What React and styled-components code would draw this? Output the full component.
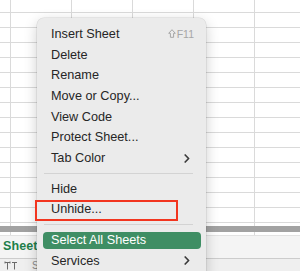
import React from "react"
import styled, { createGlobalStyle } from "styled-components"

const GlobalStyle = createGlobalStyle`
  html, body {
    margin: 0;
    padding: 0;
    overflow: hidden;
    background: #ffffff;
  }
`

const COLS = 6
const ROWS = 16

const App = () => {
  const cells = Array.from({ length: COLS * ROWS })
  const tail = Array.from({ length: COLS })

  return (
    <Screen>
      <GlobalStyle />
      <SheetGrid>
        {cells.map((_, i) => (
          <Cell key={i} />
        ))}
      </SheetGrid>
      <ScrollTrack />
      <GridTail>
        {tail.map((_, i) => (
          <TailCell key={i} />
        ))}
      </GridTail>
      <TabBar>
        <SheetTab>Sheet2</SheetTab>
      </TabBar>
      <StatusBar>
        <ToolIcon width="14" height="9" viewBox="0 0 14 9">
          <path d="M1 1.5h5M3.5 1.5v7M8 1.5h5M10.5 1.5v7" />
          <path d="M1 0.5v2M6 0.5v2" />
        </ToolIcon>
        <ToolGlyph>S</ToolGlyph>
      </StatusBar>

      <ContextMenu>
        <MenuItem>
          Insert Sheet
          <Shortcut>
            <svg width="8" height="9" viewBox="0 0 8 9">
              <path
                d="M4 0.7 L7.3 4.3 H5.6 V8.3 H2.4 V4.3 H0.7 Z"
                fill="none"
                stroke="#a6a6a6"
                strokeWidth="1"
                strokeLinejoin="round"
              />
            </svg>
            F11
          </Shortcut>
        </MenuItem>
        <MenuItem>Delete</MenuItem>
        <MenuItem>Rename</MenuItem>
        <MenuItem>Move or Copy...</MenuItem>
        <MenuItem>View Code</MenuItem>
        <MenuItem>Protect Sheet...</MenuItem>
        <MenuItem>
          Tab Color
          <Chevron />
        </MenuItem>
        <Separator />
        <MenuItem>Hide</MenuItem>
        <MenuItem>Unhide...</MenuItem>
        <Separator />
        <MenuItem $active>Select All Sheets</MenuItem>
        <MenuItem>
          Services
          <Chevron />
        </MenuItem>
      </ContextMenu>

      <Callout />
    </Screen>
  )
}

const Chevron = () => (
  <ChevronIcon width="6" height="9" viewBox="0 0 6 9">
    <path d="M1.2 1 L4.6 4.5 L1.2 8" />
  </ChevronIcon>
)

const Screen = styled.div`
  position: relative;
  width: 300px;
  height: 271px;
  overflow: hidden;
  display: flex;
  flex-direction: column;
  background: #ffffff;
  font-family: "Liberation Sans", Arial, sans-serif;
`

const SheetGrid = styled.div`
  display: grid;
  grid-template-columns: 11px repeat(5, 61px);
  grid-template-rows: 13px;
  grid-auto-rows: 15px;
  height: 226px;
  overflow: hidden;
  flex-shrink: 0;
`

const Cell = styled.div`
  box-sizing: border-box;
  border-right: 1px solid #dadada;
  border-bottom: 1px solid #dadada;
`

const ScrollTrack = styled.div`
  height: 6px;
  flex-shrink: 0;
  background: #a2a2a2;
`

const GridTail = styled.div`
  display: grid;
  grid-template-columns: 11px repeat(5, 61px);
  height: 3px;
  flex-shrink: 0;
  border-bottom: 1px solid #e2e2e2;
`

const TailCell = styled.div`
  border-right: 1px solid #dadada;
`

const TabBar = styled.div`
  display: flex;
  align-items: center;
  height: 23px;
  flex-shrink: 0;
  padding: 0 0 3px 3px;
  box-sizing: border-box;
  background: #f4f4f4;
  border-bottom: 1px solid #cccccc;
`

const SheetTab = styled.span`
  font-size: 12.5px;
  font-weight: 700;
  color: #1f7f4a;
  letter-spacing: 0.1px;
`

const StatusBar = styled.div`
  flex: 1;
  display: flex;
  align-items: flex-end;
  gap: 14px;
  padding: 0 0 0 4px;
  background: #efefef;
`

const ToolIcon = styled.svg`
  margin-bottom: 1px;
  fill: none;
  stroke: #6a6a6a;
  stroke-width: 1;
`

const ToolGlyph = styled.span`
  font-size: 10px;
  line-height: 10px;
  color: #8a8a8a;
`

const ContextMenu = styled.div`
  position: absolute;
  left: 37px;
  top: 18px;
  width: 169px;
  display: flex;
  flex-direction: column;
  padding: 5.6px 0 8px;
  box-sizing: border-box;
  background: #ebebeb;
  border-radius: 7px;
  box-shadow: 0 0 0 0.5px rgba(0, 0, 0, 0.12), 0 4px 14px rgba(0, 0, 0, 0.2);
  font-family: "Liberation Sans", Arial, sans-serif;
`

const MenuItem = styled.div`
  display: flex;
  align-items: center;
  justify-content: space-between;
  flex-shrink: 0;
  height: 17px;
  margin: 1.85px 5px 1.85px 6px;
  padding: 0 7px 0 8px;
  border-radius: 4px;
  font-size: 12.7px;
  color: ${({ $active }) => ($active ? "#ffffff" : "#262626")};
  background: ${({ $active }) => ($active ? "#3f8e64" : "transparent")};
  white-space: nowrap;
`

const Shortcut = styled.span`
  display: flex;
  align-items: center;
  gap: 1px;
  font-size: 10.5px;
  color: #a6a6a6;
`

const ChevronIcon = styled.svg`
  margin-right: 4px;
  fill: none;
  stroke: #3a3a3a;
  stroke-width: 1.7;
  stroke-linecap: round;
  stroke-linejoin: round;
`

const Separator = styled.div`
  flex-shrink: 0;
  height: 1px;
  margin: 4.5px 13px 4.5px 7px;
  background: #d3d3d3;
`

const Callout = styled.div`
  position: absolute;
  left: 35px;
  top: 200px;
  width: 143px;
  height: 21px;
  box-sizing: border-box;
  border: 2px solid #f2351f;
`

export default App
